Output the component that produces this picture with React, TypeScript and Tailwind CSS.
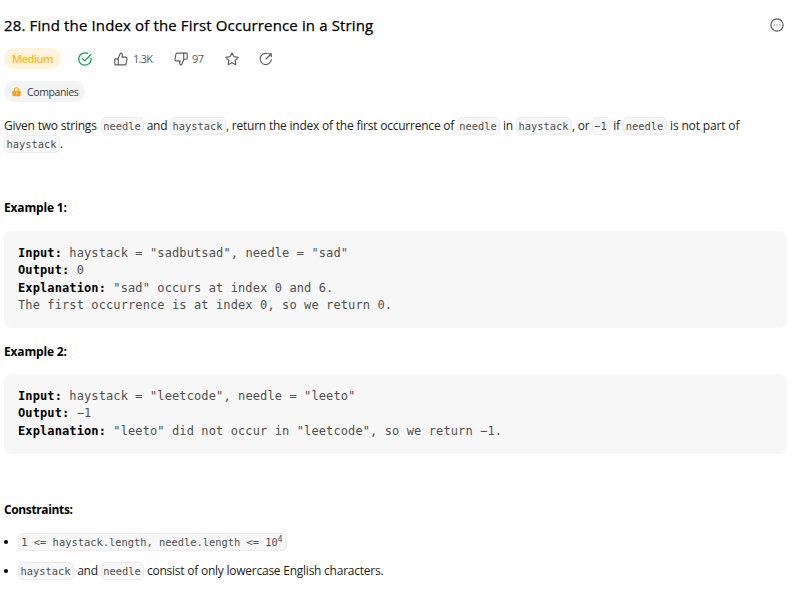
import React from "react";

const Code = ({ children, className = "" }: { children: React.ReactNode; className?: string }) => (
  <code
    className={`inline-flex h-[18px] shrink-0 items-center justify-center rounded-[5px] border border-[#ececec] bg-[#f7f7f8] pr-px font-['DejaVu_Sans_Mono',monospace] text-[10.4px] leading-[16px] tracking-normal text-[#505050] ${className}`}
  >
    {children}
  </code>
);

const Heading = ({ children, className = "" }: { children: React.ReactNode; className?: string }) => (
  <p className={`h-[18px] text-[12px] leading-[18px] font-bold text-black ${className}`}>{children}</p>
);

const Block = ({ children, className = "" }: { children: React.ReactNode; className?: string }) => (
  <pre
    className={`w-[783px] rounded-lg bg-[#f7f7f7] px-[14px] pt-[14px] font-['DejaVu_Sans_Mono',monospace] text-[12px] leading-[17.4px] tracking-[0.11px] text-[#505050] [&_b]:text-black ${className}`}
  >
    {children}
  </pre>
);

const ThumbUp = ({ className = "" }: { className?: string }) => (
  <svg viewBox="0 0 14 14" className={`h-[14px] w-[14px] shrink-0 ${className}`} fill="none" stroke="#5c5c5c" strokeWidth="1.15" strokeLinejoin="round">
    <path d="M4.3 6.1 6.4 1.2c1.4-.3 2.2.7 2 2L8 5.1h3.6c1 0 1.6.8 1.4 1.7l-.9 5c-.1.7-.6 1.1-1.3 1.1H4.3ZM4.3 6.8H1.6Q.8 6.8.8 7.6V12q0 .9.8.9h2.7" />
  </svg>
);

export default function App() {
  return (
    <main className="h-[598px] w-[800px] overflow-hidden bg-white pl-1 font-['Open_Sans','Noto_Sans',sans-serif] text-[12px] tracking-[-0.22px] text-[#1c1c1c]">
      <header className="flex h-[37px] w-[780px] items-end justify-between">
        <h1 className="h-[23px] whitespace-nowrap text-[15px] font-medium leading-[22px] tracking-[0.14px] text-black [-webkit-text-stroke:0.25px_#000]">
          28. Find the Index of the First Occurrence in a String
        </h1>
        <svg viewBox="0 0 14 14" className="mb-[5px] h-[14px] w-[14px]" fill="none" stroke="#5c5c5c">
          <circle cx="7" cy="7" r="6.1" strokeWidth="1.2" />
          <path d="M3.6 7h1.1M6.45 7h1.1M9.3 7h1.1" strokeWidth="1.1" />
        </svg>
      </header>

      <div className="mt-[11px] flex h-[21px] items-center text-[#5c5c5c]">
        <span className="flex h-[21px] w-[57px] items-center justify-center rounded-full bg-[#fff3d9] pt-px text-[11px] font-semibold tracking-[-0.5px] text-[#ffb822]">
          Medium
        </span>
        <svg viewBox="0 0 14 14" className="ml-[17px] h-[14px] w-[14px]" fill="none" stroke="#12a150" strokeWidth="1.25" strokeLinecap="round" strokeLinejoin="round">
          <path d="M9.6 1.4A6.2 6.2 0 1 0 13.1 6.4M4.6 6.8l2.2 2.1L12.6 2.7" />
        </svg>
        <ThumbUp className="ml-[22px]" />
        <span className="ml-[5px] w-[20px] whitespace-nowrap pt-px text-[11px] tracking-[-0.7px]">1.3K</span>
        <ThumbUp className="ml-[21px] rotate-180" />
        <span className="ml-[4px] w-[12px] pt-px text-[11px] tracking-[-0.6px]">97</span>
        <svg viewBox="0 0 14 14" className="ml-[21px] h-[14px] w-[14px]" fill="none" stroke="#5c5c5c" strokeWidth="1.15" strokeLinejoin="round">
          <path d="m7 .9 1.9 3.7 4.3.7-3 3 .6 4.4L7 10.8l-3.8 1.9.6-4.4-3-3 4.3-.7Z" />
        </svg>
        <svg viewBox="0 0 14 14" className="ml-[20px] h-[14px] w-[14px]" fill="none" stroke="#5c5c5c" strokeWidth="1.15" strokeLinecap="round" strokeLinejoin="round">
          <path d="M8 1.5A5.6 5.6 0 1 0 12.3 7.5M7 7l5-5M9.3 1.7h3v3" />
        </svg>
      </div>

      <div className="mt-3 flex h-[21px] w-[81px] items-center rounded-full bg-[#f2f3f4] pl-2 text-[#3f3f3f]">
        <svg viewBox="0 0 9 10" className="h-[10px] w-[9px]">
          <path d="M2.5 4V2.7a2 2 0 0 1 4 0V4" fill="none" stroke="#ffa116" strokeWidth="1.1" />
          <rect x=".3" y="3.7" width="8.4" height="5.6" rx="1.3" fill="#ffa116" />
          <path d="M4.5 5.6v1.7" stroke="#fff" />
        </svg>
        <span className="ml-[6px] mt-0.5 text-[10.5px] tracking-[-0.4px]">Companies</span>
      </div>

      <div className="mt-[15px] flex h-[18px] items-center whitespace-nowrap leading-[18px]">
        <span className="w-[97px]">Given two strings</span>
        <Code className="w-[43px]">needle</Code>
        <span className="w-[26px] text-center">and</span>
        <Code className="w-[56px]">haystack</Code>
        <span className="w-[231px]">, return the index of the first occurrence of</span>
        <Code className="w-[43px]">needle</Code>
        <span className="w-[16px] text-center">in</span>
        <Code className="w-[56px]">haystack</Code>
        <span className="w-[20px]">, or</span>
        <Code className="w-[18px]">−1</Code>
        <span className="w-[13px] text-center">if</span>
        <Code className="w-[44px]">needle</Code>
        <span className="ml-[3px] tracking-[-0.15px]">is not part of</span>
      </div>
      <div className="flex h-[18px] items-center leading-[18px]">
        <Code className="w-[56px]">haystack</Code>
        <span>.</span>
      </div>

      <Heading className="mt-[46px] tracking-[-0.17px]">Example 1:</Heading>
      <Block className="mt-[14px] h-[97px]">
        <b>Input:</b> haystack = "sadbutsad", needle = "sad"{"\n"}
        <b>Output:</b> 0{"\n"}
        <b>Explanation:</b> "sad" occurs at index 0 and 6.{"\n"}
        The first occurrence is at index 0, so we return 0.
      </Block>

      <Heading className="mt-[15px] tracking-[-0.17px]">Example 2:</Heading>
      <Block className="mt-[13px] h-[80px]">
        <b>Input:</b> haystack = "leetcode", needle = "leeto"{"\n"}
        <b>Output:</b> −1{"\n"}
        <b>Explanation:</b> "leeto" did not occur in "leetcode", so we return −1.
      </Block>

      <Heading className="mt-[47px] tracking-[-0.37px]">Constraints:</Heading>
      <ul className="mt-[14px] flex flex-col gap-[11px] whitespace-nowrap">
        <li className="flex h-[18px] items-center">
          <span className="mr-[10px] h-1 w-1 rounded-full bg-black" />
          <Code className="w-[269px]">
            <span className="whitespace-pre">
              {"1 <= haystack.length, needle.length <= 10"}
              <sup className="text-[8px]">4</sup>
            </span>
          </Code>
        </li>
        <li className="flex h-[18px] items-center">
          <span className="mr-[10px] h-1 w-1 rounded-full bg-black" />
          <Code className="w-[56px]">haystack</Code>
          <span className="w-[27px] text-center">and</span>
          <Code className="w-[43px]">needle</Code>
          <span className="ml-[3px] tracking-[-0.24px]">consist of only lowercase English characters.</span>
        </li>
      </ul>
    </main>
  );
}
